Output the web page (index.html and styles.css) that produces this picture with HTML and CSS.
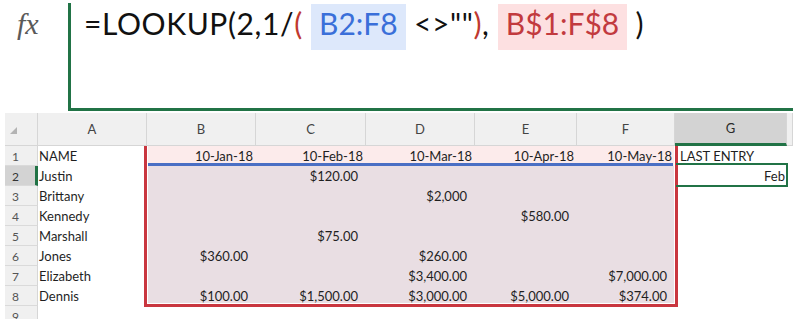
FILE: index.html
```html
<!DOCTYPE html>
<html>
<head>
<meta charset="utf-8">
<link rel="stylesheet" href="styles.css">
</head>
<body>
<div class="formula-bar">
  <div class="fx">fx</div>
  <div class="formula">
    <div class="formula-line">=LOOKUP(2,1/<span class="red">(</span> <span class="ref ref-blue">B2:F8</span> &lt;&gt;""<span class="red">)</span>, <span class="ref ref-red">B$1:F$8</span> )</div>
  </div>
</div>
<div class="sheet">
  <div class="corner"><svg width="7" height="7" viewBox="0 0 7 7"><polygon points="7,0 7,7 0,7" fill="#b3b3b3"/></svg></div>
  <div class="ch">A</div><div class="ch">B</div><div class="ch">C</div><div class="ch">D</div><div class="ch">E</div><div class="ch">F</div><div class="ch ch-sel">G</div><div class="ch"></div>

  <div class="rh">1</div><div class="c">NAME</div><div class="c f1 dt">10-Jan-18</div><div class="c f1 dt">10-Feb-18</div><div class="c f1 dt">10-Mar-18</div><div class="c f1 dt">10-Apr-18</div><div class="c f1 dt">10-May-18</div><div class="c gl">LAST ENTRY</div><div class="c"></div>

  <div class="rh rh-sel">2</div><div class="c">Justin</div><div class="c f2"></div><div class="c f2 n">$120.00</div><div class="c f2"></div><div class="c f2"></div><div class="c f2"></div><div class="c g">Feb</div><div class="c"></div>

  <div class="rh">3</div><div class="c">Brittany</div><div class="c f2"></div><div class="c f2"></div><div class="c f2 n">$2,000</div><div class="c f2"></div><div class="c f2"></div><div class="c"></div><div class="c"></div>

  <div class="rh">4</div><div class="c">Kennedy</div><div class="c f2"></div><div class="c f2"></div><div class="c f2"></div><div class="c f2 n">$580.00</div><div class="c f2"></div><div class="c"></div><div class="c"></div>

  <div class="rh">5</div><div class="c">Marshall</div><div class="c f2"></div><div class="c f2 n">$75.00</div><div class="c f2"></div><div class="c f2"></div><div class="c f2"></div><div class="c"></div><div class="c"></div>

  <div class="rh">6</div><div class="c">Jones</div><div class="c f2 n">$360.00</div><div class="c f2"></div><div class="c f2 n">$260.00</div><div class="c f2"></div><div class="c f2"></div><div class="c"></div><div class="c"></div>

  <div class="rh">7</div><div class="c">Elizabeth</div><div class="c f2"></div><div class="c f2"></div><div class="c f2 n">$3,400.00</div><div class="c f2"></div><div class="c f2 n">$7,000.00</div><div class="c"></div><div class="c"></div>

  <div class="rh">8</div><div class="c">Dennis</div><div class="c f2 n">$100.00</div><div class="c f2 n">$1,500.00</div><div class="c f2 n">$3,000.00</div><div class="c f2 n">$5,000.00</div><div class="c f2 n">$374.00</div><div class="c"></div><div class="c"></div>

  <div class="rh">9</div><div class="c"></div><div class="c"></div><div class="c"></div><div class="c"></div><div class="c"></div><div class="c"></div><div class="c"></div><div class="c"></div>

  <div class="range-red"><div class="range-inner"></div></div>
  <div class="range-blue"></div>
  <div class="sel-box"></div>
</div>
</body>
</html>
```
FILE: styles.css
```css
* { box-sizing: border-box; }
html, body { margin: 0; padding: 0; background: #fff; overflow: hidden; }
body { font-family: Lato, "Liberation Sans", sans-serif; color: #1f1f1f; width: 793px; height: 319px; }

.formula-bar { display: flex; height: 111px; }
.fx {
  width: 68px;
  font-family: "Liberation Serif", serif;
  font-style: italic;
  font-size: 30px;
  color: #5a5a5a;
  padding: 6px 0 0 17px;
  line-height: 36px;
}
.formula {
  flex: 1;
  margin-top: 3px;
  border-left: 3px solid #217346;
  border-bottom: 3px solid #217346;
  padding: 1px 0 0 13px;
}
.formula-line { font-size: 30px; line-height: 39px; white-space: pre; color: #111; letter-spacing: 0.6px; }
.red { color: #c0392f; }
.ref { display: inline-block; line-height: 39px; padding: 0 8px 7px 8px; vertical-align: top; letter-spacing: 0; }
.ref-blue { background: #dde8fb; color: #3a6fd9; }
.ref-red { background: #fde0e1; color: #c23a3e; }

.sheet {
  position: relative;
  margin: 2px 0 0 5px;
  display: grid;
  grid-template-columns: 33px 109px 109px 110px 109px 102px 98px 112px 1fr;
  grid-template-rows: 33px repeat(9, 20px);
  font-size: 13px;
}
.corner { background: #f0f0f0; border-right: 1px solid #d6d6d6; border-bottom: 1px solid #d6d6d6; position: relative; }
.corner svg { position: absolute; left: 5px; top: 14px; }
.ch {
  background: #f0f0f0;
  border-right: 1px solid #d6d6d6;
  border-bottom: 1px solid #d6d6d6;
  text-align: center;
  line-height: 32px;
  color: #444;
  font-size: 13px;
}
.ch-sel { background: #d3d3d3; color: #2a2a2a; border-bottom: 3px solid #217346; line-height: 30px; }
.rh {
  background: #f0f0f0;
  border-right: 1px solid #d6d6d6;
  border-bottom: 1px solid #dadada;
  font-size: 12px;
  color: #555;
  padding-left: 7px;
  line-height: 21px;
}
.rh-sel { background: #d3d3d3; color: #333; border-right: 3px solid #217346; }
.c { line-height: 20px; white-space: nowrap; padding-left: 1px; overflow: visible; }
.f1 { background: #fcebeb; }
.f2 { background: #e9dee3; }
.dt { text-align: right; padding-right: 3px; }
.n { text-align: right; padding-right: 8px; }
.g { text-align: right; padding-right: 2px; }
.gl { padding-left: 5px; }

.range-red {
  position: absolute;
  left: 139px; top: 33px; width: 534px; height: 161px;
  border: 3px solid #c9363f;
  border-top: none;
}
.range-inner {
  width: 100%; height: 100%;
  border: 1px solid #fff;
  border-top: none;
}
.range-blue {
  position: absolute;
  left: 143px; top: 50px; width: 525px; height: 3px;
  background: #4a6fc4;
}
.sel-box {
  position: absolute;
  left: 671px; top: 50px; width: 112px; height: 24px;
  border: 2px solid #217346;
  border-left: none;
}
```
